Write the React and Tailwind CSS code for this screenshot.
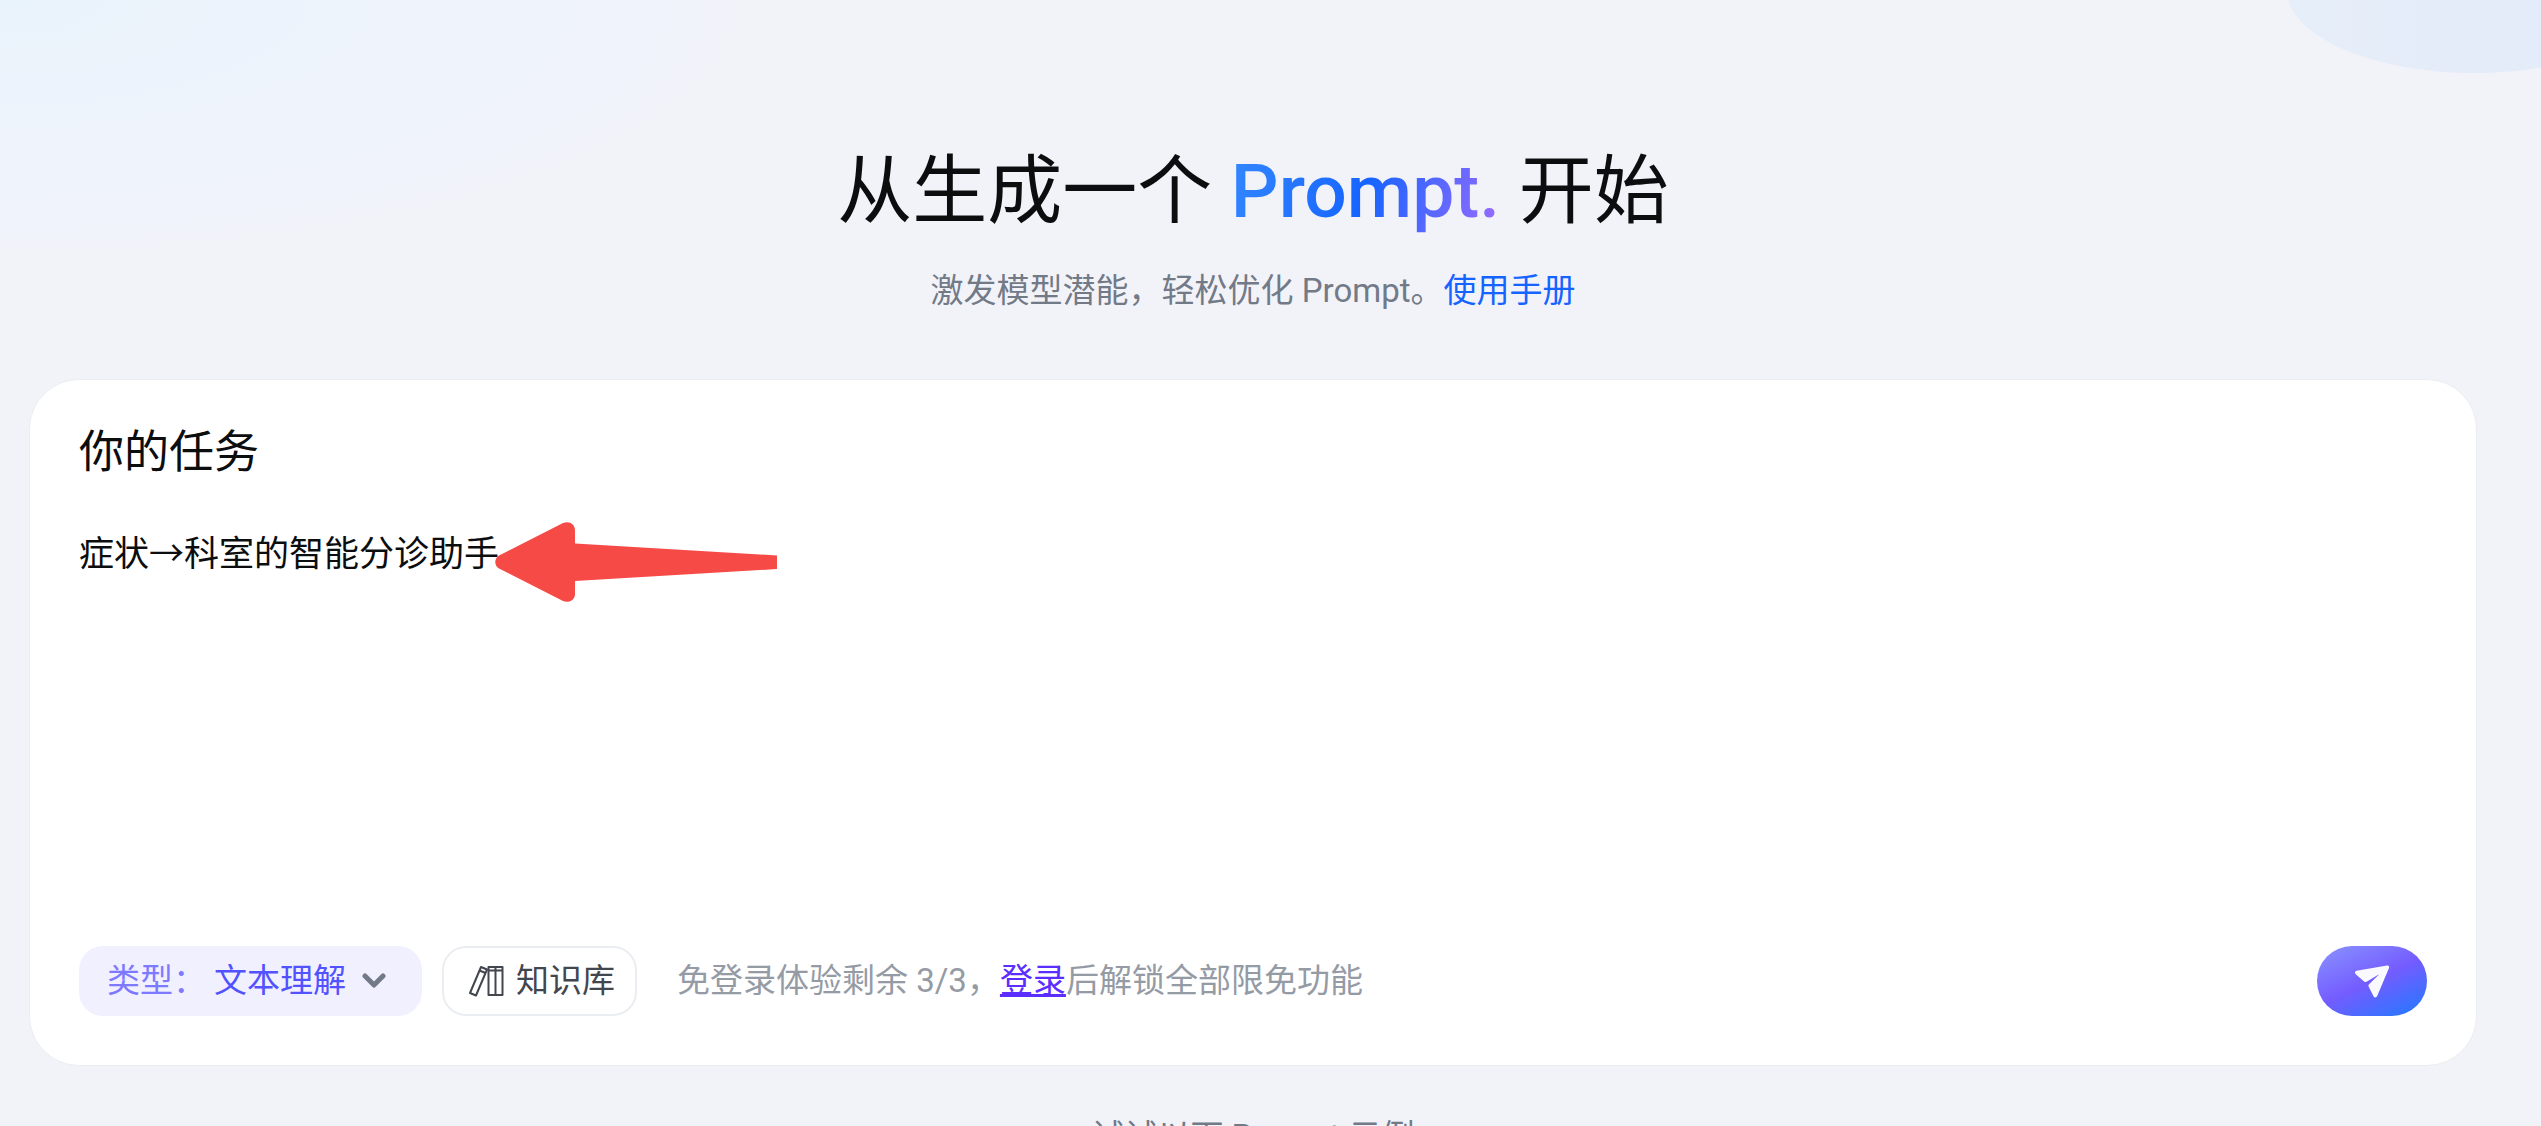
import React, { useState } from "react"

function BooksIcon({ className }) {
  return (
    <svg
      viewBox="0 0 36 36"
      className={className}
      fill="none"
      stroke="currentColor"
      strokeWidth="2"
      strokeLinejoin="round"
      aria-hidden="true"
    >
      <path d="M13 4l6 2.500-11 26-6-2.500z" />
      <path d="M11.500 7.500l6 2.500" />
      <path d="M20.500 4h14v28h-14zM27.500 4v28M20.500 7.500h14" />
    </svg>
  )
}

function SendIcon({ className }) {
  return (
    <svg viewBox="0 0 36 36" className={className} fill="#faf9ff" aria-hidden="true">
      <path d="M2.500 7.800L33 2.600c1.600-.2 2.600.8 2 2.400L23.200 33c-.8 1.800-2.800 1.900-3.700.2L14.600 23.600c-.4-1-.2-1.600.5-2.300L25.500 11 13 18.600c-1 .6-2 .5-2.900-.2L1.800 11.200c-1.300-1.200-1-3 .7-3.400z" />
    </svg>
  )
}

function ArrowMark() {
  return (
    <svg
      viewBox="0 0 284 82"
      className="pointer-events-none absolute -top-[6px] left-[415px] h-[82px] w-[284px]"
      fill="#f64a46"
      aria-hidden="true"
    >
      <path d="M5 34.500L69 2C75-.500 81 3 81 9v13.500l202 12v13.500L81 60v13c0 6-6 9.500-12 7L5 47.500c-5-3-5-10 0-13z" />
    </svg>
  )
}

function Background() {
  return (
    <div className="pointer-events-none absolute inset-0 -z-10 overflow-hidden" aria-hidden="true">
      <div className="absolute -left-[760px] -top-[260px] h-[520px] w-[1520px] rounded-[50%] bg-[radial-gradient(closest-side,#e9f3fb,#edf3fc_35%,#f0f3fb_85%,#f2f3f9)]" />
      <div className="absolute -right-[120px] -top-[93px] h-[166px] w-[374px] rounded-[50%] bg-linear-to-r from-[#e6eef9] to-[#e3eaf9]" />
    </div>
  )
}

export default function App() {
  const [task, setTask] = useState("症状→科室的智能分诊助手")
  const [type, setType] = useState("文本理解")

  return (
    <main className="relative isolate h-screen overflow-hidden bg-[#f2f3f9] pl-[29px] pr-16 font-[Roboto,'Noto_Sans_CJK_SC',sans-serif] text-[#0c0d0e]">
      <Background />

      <header className="flex flex-col items-center pt-[136px]">
        <h1 className="text-[75px] leading-[110px]">
          从生成一个{" "}
          <span className="bg-[linear-gradient(105deg,#3388ff,#1664ff_50%,#9b6bff)] bg-clip-text font-medium text-transparent">
            Prompt.
          </span>{" "}
          开始
        </h1>
        <p className="mt-5 text-[33px] leading-[50px] text-[#737a87]">
          {"激发模型潜能\uff0c轻松优化 Prompt。"}
          <a href="#manual" className="text-[#1664ff]">
            使用手册
          </a>
        </p>
      </header>

      <section className="mt-[63px] flex h-[687px] flex-col rounded-[50px] border border-[#eaedf1] bg-white p-[49px]">
        <label htmlFor="task" className="text-[45px] leading-[48px]">
          你的任务
        </label>
        <div className="relative mt-[50px] flex-1">
          <textarea
            id="task"
            value={task}
            onChange={(e) => setTask(e.target.value)}
            className="block h-full w-full resize-none bg-transparent text-[35px] leading-[56px] outline-none"
          />
          <ArrowMark />
        </div>

        <div className="flex h-[70px] items-center text-[33px]">
          <div className="flex h-full items-center rounded-3xl bg-[#f1f0ff] pl-7 pr-9">
            <label htmlFor="type" className="text-[#7d7aff]">
              {"类型\uff1a"}
            </label>
            <select
              id="type"
              value={type}
              onChange={(e) => setType(e.target.value)}
              className="ml-2 appearance-none bg-transparent text-[#5252ff] outline-none"
            >
              <option>文本理解</option>
            </select>
            <svg
              viewBox="0 0 24 16"
              className="ml-4 h-4 w-6"
              fill="none"
              stroke="#737a87"
              strokeWidth="5"
              strokeLinecap="round"
              strokeLinejoin="round"
              aria-hidden="true"
            >
              <path d="M3 3l9 9 9-9" />
            </svg>
          </div>

          <button
            type="button"
            className="ml-5 flex h-full items-center gap-3 rounded-3xl border-2 border-[#eaedf1] bg-white pl-6 pr-5 text-[#42464e]"
          >
            <BooksIcon className="h-9 w-9" />
            知识库
          </button>

          <p className="ml-10 text-[#959ba5]">
            {"免登录体验剩余 3/3\uff0c"}
            <a href="#login" className="text-[#5c2dff] underline">
              登录
            </a>
            后解锁全部限免功能
          </p>

          <button
            type="button"
            aria-label="发送"
            className="ml-auto flex h-full w-[110px] items-center justify-center rounded-full bg-[linear-gradient(155deg,#8a94ff,#745cff_50%,#1e7bff)]"
          >
            <SendIcon className="h-9 w-9" />
          </button>
        </div>
      </section>

      <p className="mt-[46px] text-center text-[33px] leading-[50px] text-[#737a87]">
        试试以下 Prompt 示例
      </p>
    </main>
  )
}
